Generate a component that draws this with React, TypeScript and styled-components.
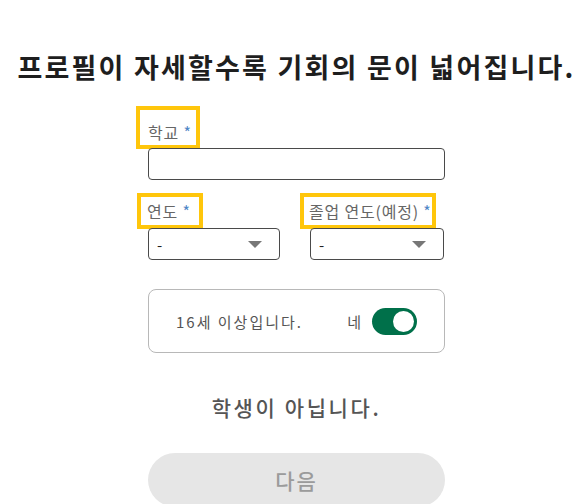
import React, { useState } from 'react';
import styled, { createGlobalStyle } from 'styled-components';

const GlobalStyle = createGlobalStyle`
  body {
    margin: 0;
    background: #fff;
    font-family: "Noto Sans CJK KR", "Noto Sans", sans-serif;
  }
`;

const Page = styled.div`
  display: flex;
  flex-direction: column;
  align-items: center;
  padding-left: 10px;
`;

const Title = styled.h1`
  margin: 49px 0 0;
  font-size: 27px;
  line-height: 36px;
  font-weight: 700;
  letter-spacing: 2.2px;
  color: #1e1e1e;
  white-space: nowrap;
`;

const Form = styled.div`
  width: 297px;
  margin-top: 21px;
  display: flex;
  flex-direction: column;
`;

const Field = styled.div`
  display: flex;
  flex-direction: column;
  align-items: flex-start;
`;

const Label = styled.div<{ $shift: number; $padL: number; $padR: number; $h: number; $top: number }>`
  box-sizing: border-box;
  height: ${(p) => p.$h}px;
  border: 4px solid #ffc60b;
  margin-left: -${(p) => p.$shift}px;
  margin-bottom: -1px;
  padding: ${(p) => p.$top}px ${(p) => p.$padR}px 0 ${(p) => p.$padL}px;
  font-size: 16px;
  line-height: 22px;
  letter-spacing: 0.8px;
  color: #666;
  white-space: nowrap;
`;

const Star = styled.span`
  color: #4f86c6;
`;

const TextInput = styled.div`
  box-sizing: border-box;
  width: 100%;
  height: 32px;
  border: 1px solid #4a4a4a;
  border-radius: 4px;
`;

const Row = styled.div`
  display: grid;
  grid-template-columns: 132px 134px;
  column-gap: 30px;
  margin-top: 13px;
`;

const Select = styled.div`
  box-sizing: border-box;
  width: 100%;
  height: 32px;
  border: 1px solid #4a4a4a;
  border-radius: 4px;
  display: flex;
  align-items: center;
  justify-content: space-between;
  padding: 0 17px 0 8px;
  font-size: 15px;
  color: #222;
`;

const Caret = styled.span`
  width: 0;
  height: 0;
  border-left: 7px solid transparent;
  border-right: 7px solid transparent;
  border-top: 7px solid #777;
`;

const Card = styled.div`
  box-sizing: border-box;
  height: 64px;
  margin-top: 29px;
  border: 1px solid #b8b8b8;
  border-radius: 8px;
  display: flex;
  align-items: center;
  padding: 0 27px 0 27px;
  font-size: 15px;
  letter-spacing: 2px;
  color: #555;
`;

const CardText = styled.span`
  flex: 1;
`;

const Yes = styled.span`
  margin-right: 9px;
  color: #555;
`;

const Switch = styled.button<{ $on: boolean }>`
  position: relative;
  width: 45px;
  height: 27px;
  border: none;
  border-radius: 14px;
  padding: 0;
  background: ${(p) => (p.$on ? '#00704a' : '#bbb')};
  cursor: pointer;
`;

const Knob = styled.span<{ $on: boolean }>`
  position: absolute;
  top: 3px;
  left: ${(p) => (p.$on ? '21px' : '3px')};
  width: 21px;
  height: 21px;
  border-radius: 50%;
  background: #fff;
`;

const NotStudent = styled.div`
  margin-top: 39px;
  text-align: center;
  font-size: 21px;
  font-weight: 500;
  line-height: 30px;
  letter-spacing: 2.6px;
  color: #555;
`;

const NextButton = styled.button`
  margin-top: 31px;
  height: 54px;
  border: none;
  border-radius: 27px;
  background: #e6e6e6;
  color: #9b9b9b;
  font-family: inherit;
  font-size: 21px;
  font-weight: 500;
  letter-spacing: 2px;
`;

const App = () => {
  const [over16, setOver16] = useState(true);
  return (
    <Page>
      <GlobalStyle />
      <Title>프로필이 자세할수록 기회의 문이 넓어집니다.</Title>
      <Form>
        <Field>
          <Label $shift={12} $padL={8} $padR={4} $h={43} $top={11}>
            학교 <Star>*</Star>
          </Label>
          <TextInput />
        </Field>
        <Row>
          <Field>
            <Label $shift={11} $padL={6} $padR={8} $h={36} $top={3}>
              연도 <Star>*</Star>
            </Label>
            <Select>
              -
              <Caret />
            </Select>
          </Field>
          <Field>
            <Label $shift={10} $padL={5} $padR={0} $h={36} $top={3}>
              졸업 연도(예정) <Star>*</Star>
            </Label>
            <Select>
              -
              <Caret />
            </Select>
          </Field>
        </Row>
        <Card>
          <CardText>16세 이상입니다.</CardText>
          <Yes>네</Yes>
          <Switch $on={over16} onClick={() => setOver16(!over16)}>
            <Knob $on={over16} />
          </Switch>
        </Card>
        <NotStudent>학생이 아닙니다.</NotStudent>
        <NextButton>다음</NextButton>
      </Form>
    </Page>
  );
};

export default App;
